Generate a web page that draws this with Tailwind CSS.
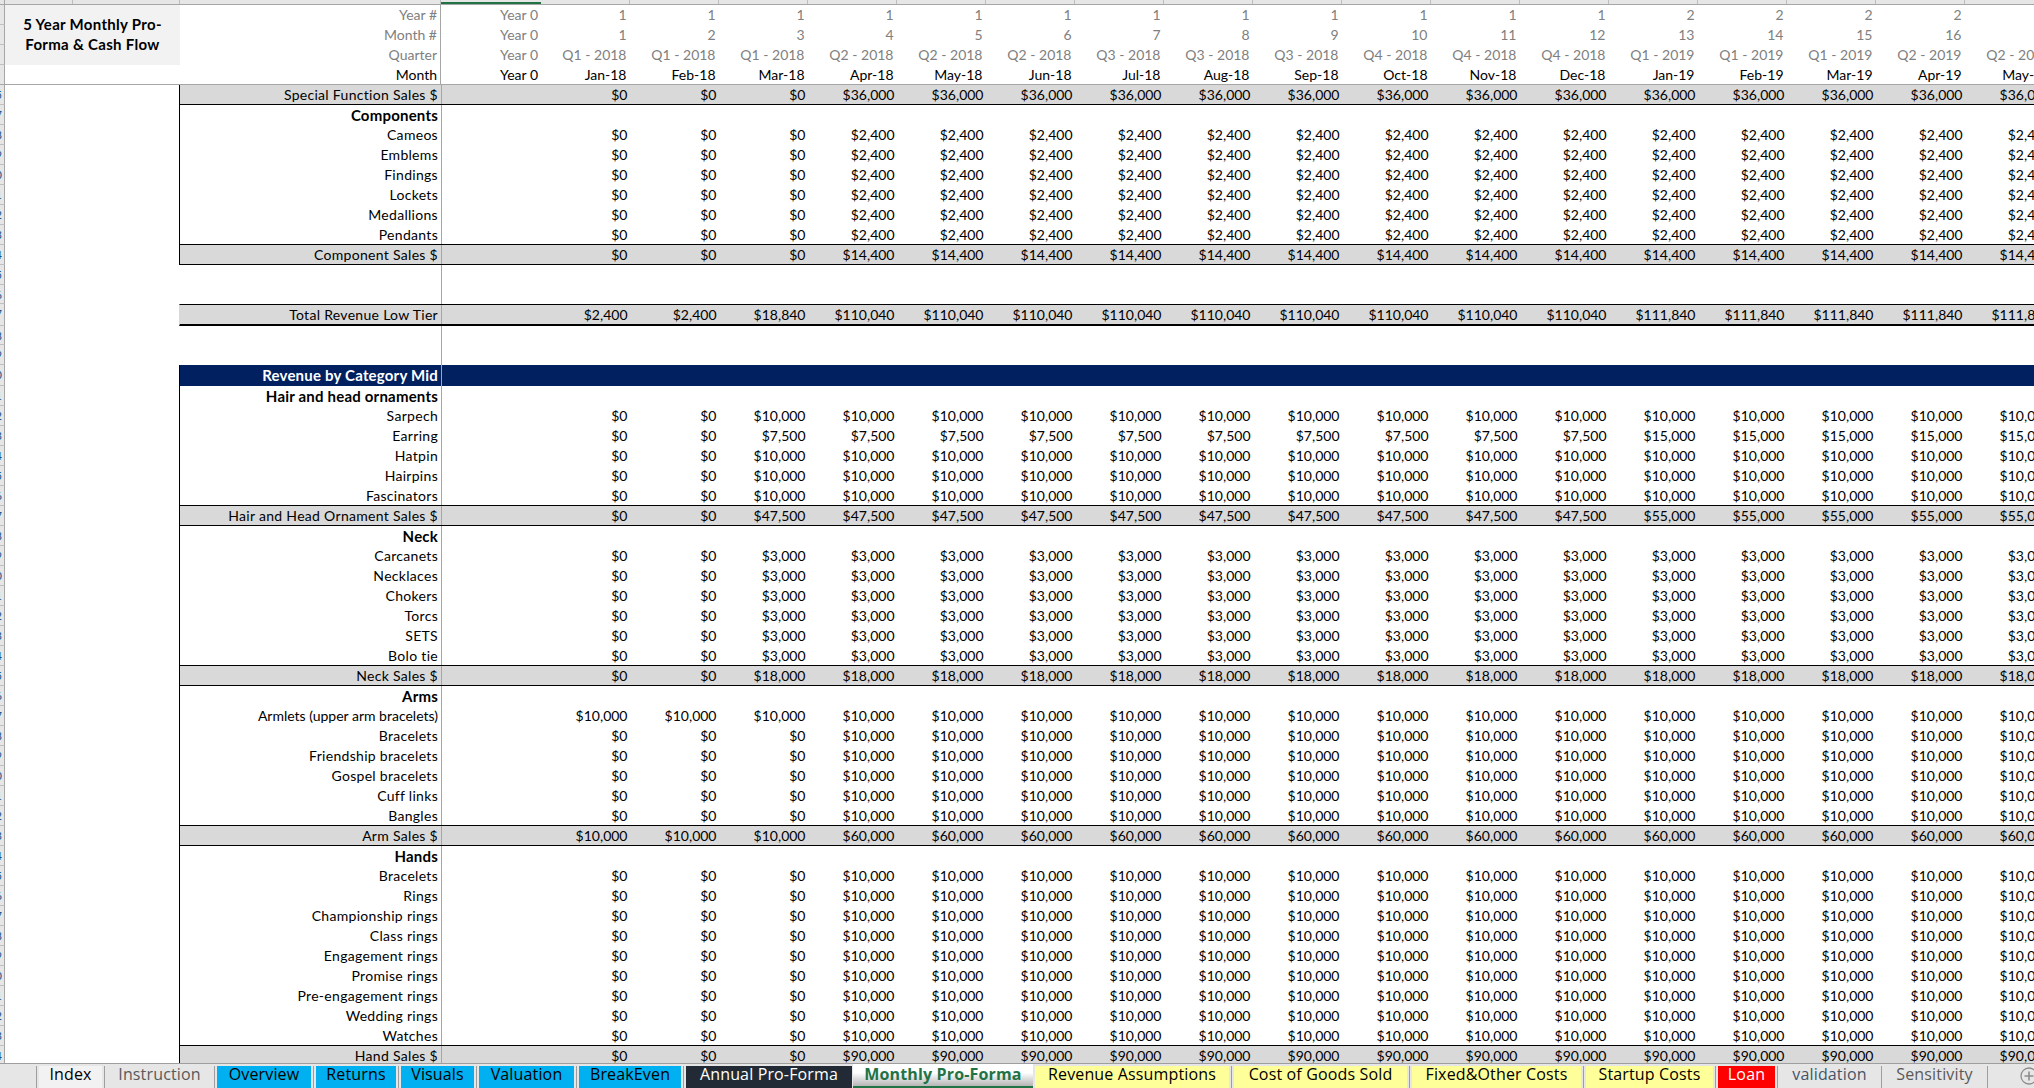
<!DOCTYPE html>
<html>
<head>
<meta charset="utf-8">
<script src="https://cdn.jsdelivr.net/npm/@tailwindcss/browser@4"></script>
</head>
<body class="bg-white">
<div class="w-[2034px] h-[1088px] overflow-hidden flex flex-col bg-white text-black font-['Lato','Liberation_Sans',sans-serif] text-[14px] leading-[20px]">
  <!-- column header strip -->
  <div class="h-[5px] shrink-0 flex bg-[#e6e6e6] border-b border-[#a6a6a6]" id="cols"></div>
  <!-- frozen header -->
  <div class="flex shrink-0 h-[80px]">
    <div class="w-[5px] shrink-0 flex flex-col">
      <div class="h-[20px] bg-[#e6e6e6] border-r border-r-[#a6a6a6] border-b border-b-[#c0c0c0]"></div>
      <div class="h-[20px] bg-[#e6e6e6] border-r border-r-[#a6a6a6] border-b border-b-[#c0c0c0]"></div>
      <div class="h-[20px] bg-[#e6e6e6] border-r border-r-[#a6a6a6] border-b border-b-[#c0c0c0]"></div>
      <div class="h-[20px] bg-[#e6e6e6] border-r border-r-[#a6a6a6] border-b border-b-[#a6a6a6]"></div>
    </div>
    <div class="w-[175px] shrink-0 flex flex-col border-b border-[#a6a6a6]">
      <div class="h-[60px] pb-[2px] bg-[#f2f2f2] flex items-center justify-center text-center font-bold text-[15px] tracking-[0.3px]">5 Year Monthly Pro-<br>Forma &amp; Cash Flow</div>
    </div>
    <div class="flex-1 min-w-0 flex flex-col" id="head"></div>
  </div>
  <div class="flex-1 min-h-0 overflow-hidden flex flex-col" id="rows"></div>
  <!-- sheet tabs -->
  <div class="h-[25px] shrink-0 bg-[#e6e6e6] border-t border-[#9e9e9e] pt-[2px] pl-[36px] flex items-stretch [&>*]:shrink-0 font-['Open_Sans','Noto_Sans',sans-serif] text-[16px] tracking-[0.15px] leading-[17px] relative" id="tabs">
    <i class="w-px bg-[#9e9e9e] mr-[2px]"></i>
    <div class="w-[63px] bg-[#f2f2f2] text-center text-black">Index</div>
    <i class="w-px bg-[#9e9e9e] mx-[2px]"></i>
    <div class="w-[105px] text-center text-[#595959]">Instruction</div>
    <i class="w-px bg-[#9e9e9e] mx-[2px]"></i>
    <div class="w-[94px] bg-[#00b0f0] text-center">Overview</div>
    <i class="w-px bg-[#9e9e9e] mx-[2px]"></i>
    <div class="w-[80px] bg-[#00b0f0] text-center">Returns</div>
    <i class="w-px bg-[#9e9e9e] mx-[2px]"></i>
    <div class="w-[73px] bg-[#00b0f0] text-center">Visuals</div>
    <i class="w-px bg-[#9e9e9e] mx-[2px]"></i>
    <div class="w-[95px] bg-[#00b0f0] text-center">Valuation</div>
    <i class="w-px bg-[#9e9e9e] mx-[2px]"></i>
    <div class="w-[102px] bg-[#00b0f0] text-center">BreakEven</div>
    <i class="w-px bg-[#9e9e9e] mx-[2px]"></i>
    <div class="w-[166px] bg-[#222b35] text-center text-white">Annual Pro-Forma</div>
    <div class="w-[180px] ml-px -mt-[2px] mb-0 bg-gradient-to-b from-white from-40% to-[#b5b5b5] border-b-2 border-b-[#217346] text-center font-bold text-[#217346] pt-[2px]">Monthly Pro-Forma</div>
    <div class="w-[194px] ml-[2px] bg-[#ffff99] text-center">Revenue Assumptions</div>
    <i class="w-px bg-[#9e9e9e] mx-[2px]"></i>
    <div class="w-[173px] bg-[#ffff99] text-center">Cost of Goods Sold</div>
    <i class="w-px bg-[#9e9e9e] mx-[2px]"></i>
    <div class="w-[169px] bg-[#ffff99] text-center">Fixed&amp;Other Costs</div>
    <i class="w-px bg-[#9e9e9e] mx-[2px]"></i>
    <div class="w-[127px] bg-[#ffff99] text-center">Startup Costs</div>
    <i class="w-px bg-[#9e9e9e] mx-[2px]"></i>
    <div class="w-[57px] bg-[#ff0000] text-center text-white">Loan</div>
    <i class="w-px bg-[#9e9e9e] mx-[2px]"></i>
    <div class="w-[99px] text-center text-[#44546a]">validation</div>
    <i class="w-px bg-[#9e9e9e] mx-[2px]"></i>
    <div class="w-[101px] text-center text-[#595959]">Sensitivity</div>
    <i class="w-px bg-[#9e9e9e] mx-[2px]"></i>
    <svg class="ml-[30px] mt-[1px] w-[18px] h-[18px] overflow-visible" viewBox="0 0 18 18" fill="none" stroke="#8c8c8c"><circle cx="9" cy="9" r="8" stroke-width="1.3"/><path d="M9 4.5v9M4.5 9h9" stroke-width="1.6"/></svg>
  </div>
</div>
<script>
const N = 17;
const months = ['Jan-18','Feb-18','Mar-18','Apr-18','May-18','Jun-18','Jul-18','Aug-18','Sep-18','Oct-18','Nov-18','Dec-18','Jan-19','Feb-19','Mar-19','Apr-19','May-19'];
const years = months.map((m,i)=> i<12 ? '1' : '2');
const nums = months.map((m,i)=> String(i+1));
const quarters = months.map((m,i)=> 'Q'+(Math.floor(i/3)%4+1)+' - '+(i<12?'2018':'2019'));

// column letters strip
const colStrip = document.getElementById('cols');
[[5,''],[68,'r'],[107,'r'],[261,'r']].forEach(([w,b])=>{
  const d=document.createElement('div');
  d.className = b ? 'shrink-0 h-full border-r border-[#bdbdbd]' : 'shrink-0 h-full border-r border-[#a6a6a6]';
  d.style.width=w+'px'; colStrip.appendChild(d);
});
const green=document.createElement('div');
green.className='w-[100px] shrink-0 h-[2px] mt-[2px] bg-[#217346]';
colStrip.appendChild(green);
for(let i=0;i<N;i++){
  const d=document.createElement('div');
  d.className='w-[89px] shrink-0 h-full border-r border-[#bdbdbd]';
  colStrip.appendChild(d);
}

function cells(year0, vals){
  let h = '<div class="w-[100px] shrink-0 pr-[3px] text-right">'+(year0||'')+'</div>';
  for(let i=0;i<N;i++) h += '<div class="w-[89px] shrink-0 pr-[3.5px] text-right whitespace-nowrap">'+(vals?vals[i]:'')+'</div>';
  return h;
}

// frozen rows
const head = document.getElementById('head');
[['Year #','Year 0',years,'text-[#808080]'],['Month #','Year 0',nums,'text-[#808080]'],['Quarter','Year 0',quarters,'text-[#808080]'],['Month','Year 0',months,'text-black border-b border-[#a6a6a6]']].forEach(r=>{
  head.insertAdjacentHTML('beforeend','<div class="h-[20px] flex w-[1854px] '+r[3]+'"><div class="w-[261px] shrink-0 pr-[3px] text-right border-r border-[#a6a6a6]">'+r[0]+'</div>'+cells(r[1],r[2])+'</div>');
});

const STRIP = 'w-[5px] shrink-0 bg-[#e6e6e6] border-r border-r-[#a6a6a6] border-b border-b-[#c0c0c0] overflow-hidden flex justify-end pr-[2px] text-[11px] text-[#14508c]';
const BASE = 'flex w-[1855px] shrink-0 border-l border-l-black';
const KIND = {
  n: BASE,
  b: BASE,
  e: BASE+' border-b border-b-black',
  s: BASE+' bg-[#d9d9d9] border-b border-b-black',
  blank: 'flex w-[1855px] shrink-0 border-l border-l-transparent',
  total: 'flex w-[1855px] shrink-0 border-l border-l-[#d9d9d9] bg-[#d9d9d9] border-t border-t-black border-b-2 border-b-black',
  cat: BASE+' bg-[#002060] text-white'
};
const HEIGHT = {h20:'h-[20px]',h19:'h-[19px]',h21:'h-[21px]',h22:'h-[22px]'};
let digit = 5;
function row(label, vals, kind, hk){
  kind = kind||'n';
  const hc = HEIGHT[hk||'h20'];
  let lab = (kind=='b'||kind=='cat') ? 'font-bold text-[15px] tracking-[0.2px]' : 'tracking-[0.3px]';
  if(label.indexOf('Armlets')==0) lab = '';
  const d = String(digit%10);
  const html = '<div class="flex shrink-0 '+hc+'"><div class="'+STRIP+'"><span class="shrink-0">'+d+'</span></div><div class="w-[174px] shrink-0"></div>'
    +'<div class="'+KIND[kind]+' '+hc+'"><div class="w-[262px] shrink-0 pr-[3px] text-right border-r border-r-[#a6a6a6] whitespace-nowrap '+lab+'">'+label+'</div>'+cells('',vals)+'</div></div>';
  document.getElementById('rows').insertAdjacentHTML('beforeend',html);
  digit = digit+1;
}
const z3 = (x)=> months.map((m,i)=> i<3 ? '$0' : x);
const z2 = (x)=> months.map((m,i)=> i<2 ? '$0' : x);

row('Special Function Sales $', z3('$36,000'),'s'); digit=7;
row('Components',null,'b');
['Cameos','Emblems','Findings','Lockets','Medallions'].forEach(l=>row(l,z3('$2,400')));
row('Pendants',z3('$2,400'),'e');
row('Component Sales $',z3('$14,400'),'s');
row('',null,'blank');
row('',null,'blank','h19');
row('Total Revenue Low Tier',months.map((m,i)=> i<2?'$2,400': i==2?'$18,840': i<12?'$110,040':'$111,840'),'total','h22');
row('',null,'blank','h19');
row('',null,'blank');
row('Revenue by Category Mid',null,'cat','h21');
row('Hair and head ornaments',null,'b');
row('Sarpech',z2('$10,000'));
row('Earring',months.map((m,i)=> i<2?'$0': i<12?'$7,500':'$15,000'));
row('Hatpin',z2('$10,000'));
row('Hairpins',z2('$10,000'));
row('Fascinators',z2('$10,000'),'e');
row('Hair and Head Ornament Sales $',months.map((m,i)=> i<2?'$0': i<12?'$47,500':'$55,000'),'s');
row('Neck',null,'b');
['Carcanets','Necklaces','Chokers','Torcs','SETS'].forEach(l=>row(l,z2('$3,000')));
row('Bolo tie',z2('$3,000'),'e');
row('Neck Sales $',z2('$18,000'),'s');
row('Arms',null,'b');
row('Armlets (upper arm bracelets)',months.map(()=>'$10,000'));
['Bracelets','Friendship bracelets','Gospel bracelets','Cuff links'].forEach(l=>row(l,z3('$10,000')));
row('Bangles',z3('$10,000'),'e');
row('Arm Sales $',months.map((m,i)=> i<3?'$10,000':'$60,000'),'s');
row('Hands',null,'b');
['Bracelets','Rings','Championship rings','Class rings','Engagement rings','Promise rings','Pre-engagement rings','Wedding rings'].forEach(l=>row(l,z3('$10,000')));
row('Watches',z3('$10,000'),'e');
row('Hand Sales $',z3('$90,000'),'s');
</script>
</body>
</html>
